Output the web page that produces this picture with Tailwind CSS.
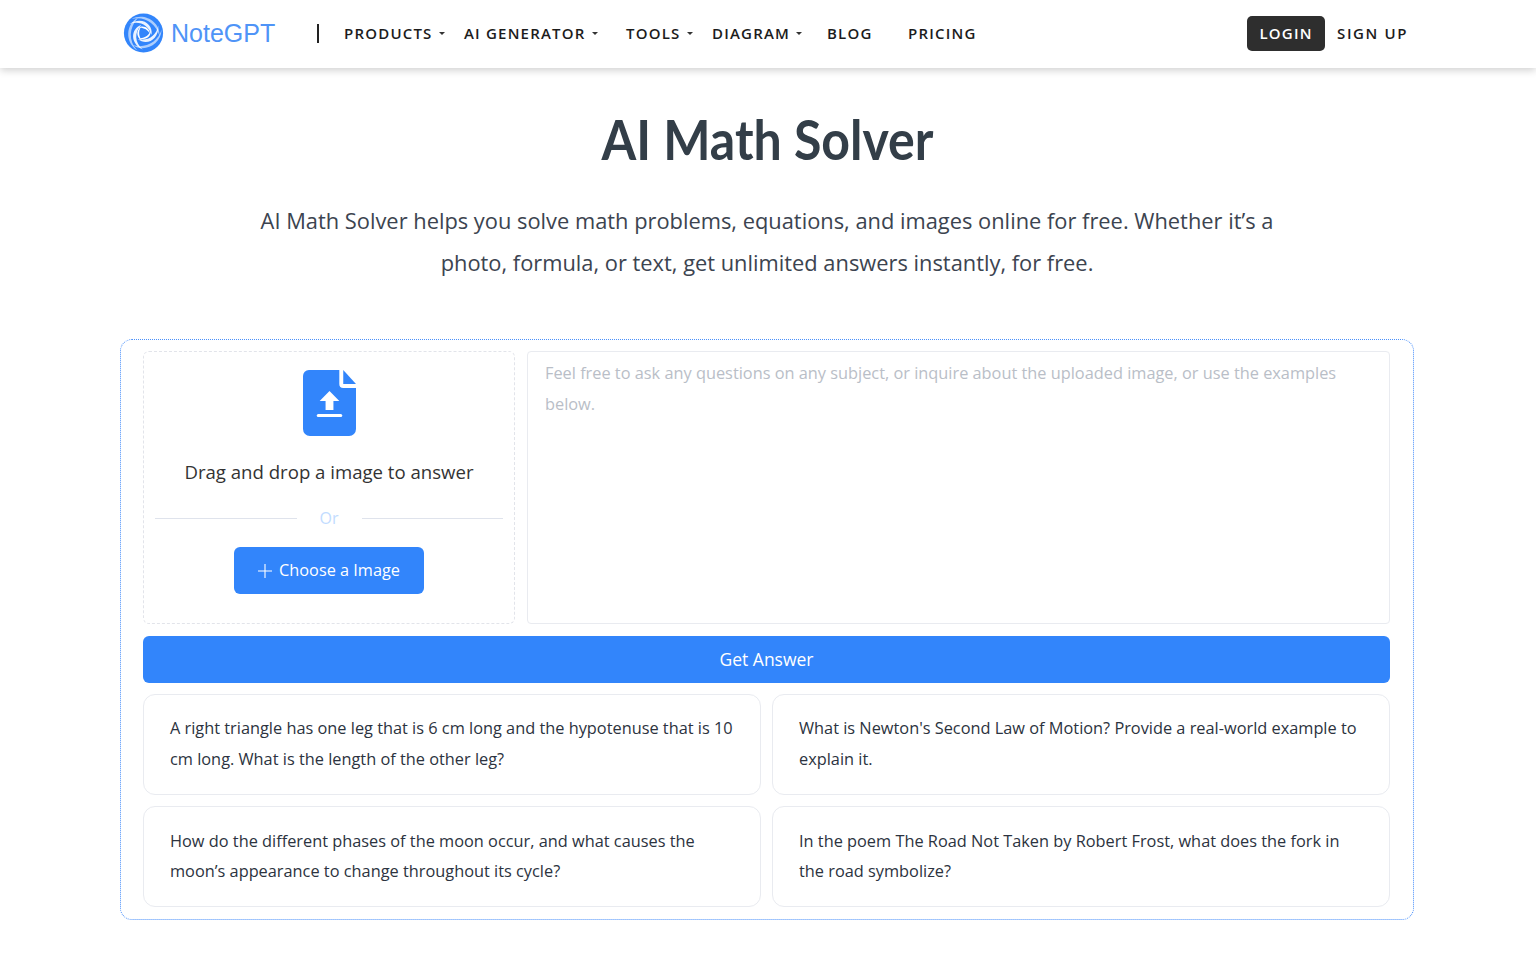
<!DOCTYPE html>
<html lang="en">
<head>
  <meta charset="UTF-8" />
  <title>AI Math Solver | NoteGPT</title>
  <script src="https://cdn.jsdelivr.net/npm/@tailwindcss/browser@4"></script>
</head>
<body class="bg-white font-['Open_Sans',sans-serif] text-[#2c3340] h-[973px] overflow-hidden">

  <!-- Navbar -->
  <header class="h-[68px] bg-white shadow-[0_2px_8px_rgba(0,0,0,0.2)] flex items-center pb-[2px] pl-[123px] pr-[128px] relative">
    <a class="flex items-center w-[194px]">
      <svg width="41" height="40" viewBox="0 0 40 40" class="mr-[7px] shrink-0">
        <circle cx="20" cy="20" r="19.6" fill="#3285fb" />
        <defs>
          <g id="swirl">
            <path d="M28 22 C30 11 18 3 6 11 C16 7.500 25 12 28 22 Z" fill="#fff" fill-opacity="0.9" />
            <path d="M36 23 C37 9 21 -1 8 6 C21 3 32 10 36 23 Z" fill="#fff" fill-opacity="0.6" />
            <path d="M26.500 21 C26 14 19 11.500 14 15 C19 14 24 16 26.500 21 Z" fill="#fff" />
          </g>
        </defs>
        <use href="#swirl" />
        <use href="#swirl" transform="rotate(120 20 20)" />
        <use href="#swirl" transform="rotate(240 20 20)" />
      </svg>
      <span class="font-['Liberation_Sans',sans-serif] text-[25px] leading-none text-[#4f94f7]">NoteGPT</span>
    </a>
    <div class="w-[2px] h-[19px] bg-[#222] mr-[25px]"></div>
    <nav class="flex items-center text-[15px] font-semibold tracking-[1.2px] text-[#1c1c1c]">
      <a class="flex items-center w-[120px]">PRODUCTS<span class="ml-[6px] w-0 h-0 border-x-[3px] border-x-transparent border-t-[3px] border-t-[#333]"></span></a>
      <a class="flex items-center w-[162px]">AI GENERATOR<span class="ml-[6px] w-0 h-0 border-x-[3px] border-x-transparent border-t-[3px] border-t-[#333]"></span></a>
      <a class="flex items-center w-[86px]">TOOLS<span class="ml-[6px] w-0 h-0 border-x-[3px] border-x-transparent border-t-[3px] border-t-[#333]"></span></a>
      <a class="flex items-center w-[115px]">DIAGRAM<span class="ml-[6px] w-0 h-0 border-x-[3px] border-x-transparent border-t-[3px] border-t-[#333]"></span></a>
      <a class="w-[81px]">BLOG</a>
      <a>PRICING</a>
    </nav>
    <div class="ml-auto flex items-center text-[15px] font-semibold tracking-[1.2px]">
      <a class="h-[35px] w-[78px] bg-[#2e2e2e] text-white rounded-[5px] flex items-center justify-center">LOGIN</a>
      <a class="ml-[12px] tracking-[1.6px] text-[#1c1c1c]">SIGN UP</a>
    </div>
  </header>

  <main class="flex flex-col items-center pr-[2px]">
    <h1 class="mt-[35px] text-[55px] leading-[72px] font-bold text-[#333e48] font-['Lato',sans-serif] scale-x-[0.91]">AI Math Solver</h1>
    <p class="mt-[25px] w-[1060px] text-center text-[21.85px] leading-[41.5px] text-[#3c4450]">AI Math Solver helps you solve math problems, equations, and images online for free. Whether it’s a photo, formula, or text, get unlimited answers instantly, for free.</p>

    <!-- Tool box -->
    <section class="mt-[56px] w-[1294px] h-[581px] border border-dotted border-[#4a90fb] rounded-[12px] pl-[22px] pr-[23px] py-[11px] flex flex-col">
      <div class="flex gap-[12px] h-[273px] shrink-0">
        <div class="w-[372px] border border-dashed border-[#e2e4ea] rounded-[6px] flex flex-col items-center pt-[18px] px-[11px]">
          <svg width="53" height="67" viewBox="0 0 54 67" preserveAspectRatio="none">
            <path d="M6 0 H37 V14 a4 4 0 0 0 4 4 H54 V59 a7 7 0 0 1 -7 7 H7 a7 7 0 0 1 -7 -7 V6 a6 6 0 0 1 6 -6 Z" fill="#3285fb" />
            <path d="M41 0 L54 14 H41 Z" fill="#3285fb" />
            <path d="M27 21 L37 31 H31 V40 H23 V31 H17 Z" fill="#fff" />
            <rect x="14" y="44" width="26" height="3" rx="1.5" fill="#fff" />
          </svg>
          <p class="mt-[22px] text-[18.6px] leading-[26px] text-[#333]">Drag and drop a image to answer</p>
          <div class="mt-[22px] w-full flex items-center gap-[23px] text-[16px] leading-[22px] text-[#c2dcff]">
            <span class="flex-1 h-[1px] bg-[#dfe3ec]"></span>Or<span class="flex-1 h-[1px] bg-[#dfe3ec]"></span>
          </div>
          <button class="mt-[18px] w-[190px] h-[47px] rounded-[6px] bg-[#3285fb] text-white text-[16.3px] flex items-center justify-center">
            <svg width="14" height="14" viewBox="0 0 14 14" class="mr-[7px]" stroke="#fff" stroke-width="1.1"><path d="M7 0 V14 M0 7 H14" /></svg>Choose a Image
          </button>
        </div>
        <div class="flex-1 border border-[#e9ebf0] rounded-[4px] px-[17px] py-[6px] text-[16.33px] leading-[31px] text-[#b9bec7]">Feel free to ask any questions on any subject, or inquire about the uploaded image, or use the examples below.</div>
      </div>

      <button class="mt-[12px] h-[47px] rounded-[6px] bg-[#3285fb] text-white text-[17.5px] shrink-0">Get Answer</button>

      <div class="mt-[11px] grid grid-cols-2 gap-x-[11px] gap-y-[11px] text-[16.33px] leading-[31px] text-[#2c3340]">
        <div class="h-[101px] border border-[#e9ebf0] rounded-[12px] px-[26px] pt-[18px]">A right triangle has one leg that is 6 cm long and the hypotenuse that is 10 cm long. What is the length of the other leg?</div>
        <div class="h-[101px] border border-[#e9ebf0] rounded-[12px] px-[26px] pt-[18px]">What is Newton's Second Law of Motion? Provide a real-world example to explain it.</div>
        <div class="h-[101px] border border-[#e9ebf0] rounded-[12px] px-[26px] pt-[19px] leading-[30px]">How do the different phases of the moon occur, and what causes the moon’s appearance to change throughout its cycle?</div>
        <div class="h-[101px] border border-[#e9ebf0] rounded-[12px] px-[26px] pt-[19px] leading-[30px]">In the poem The Road Not Taken by Robert Frost, what does the fork in the road symbolize?</div>
      </div>
    </section>
  </main>
</body>
</html>
